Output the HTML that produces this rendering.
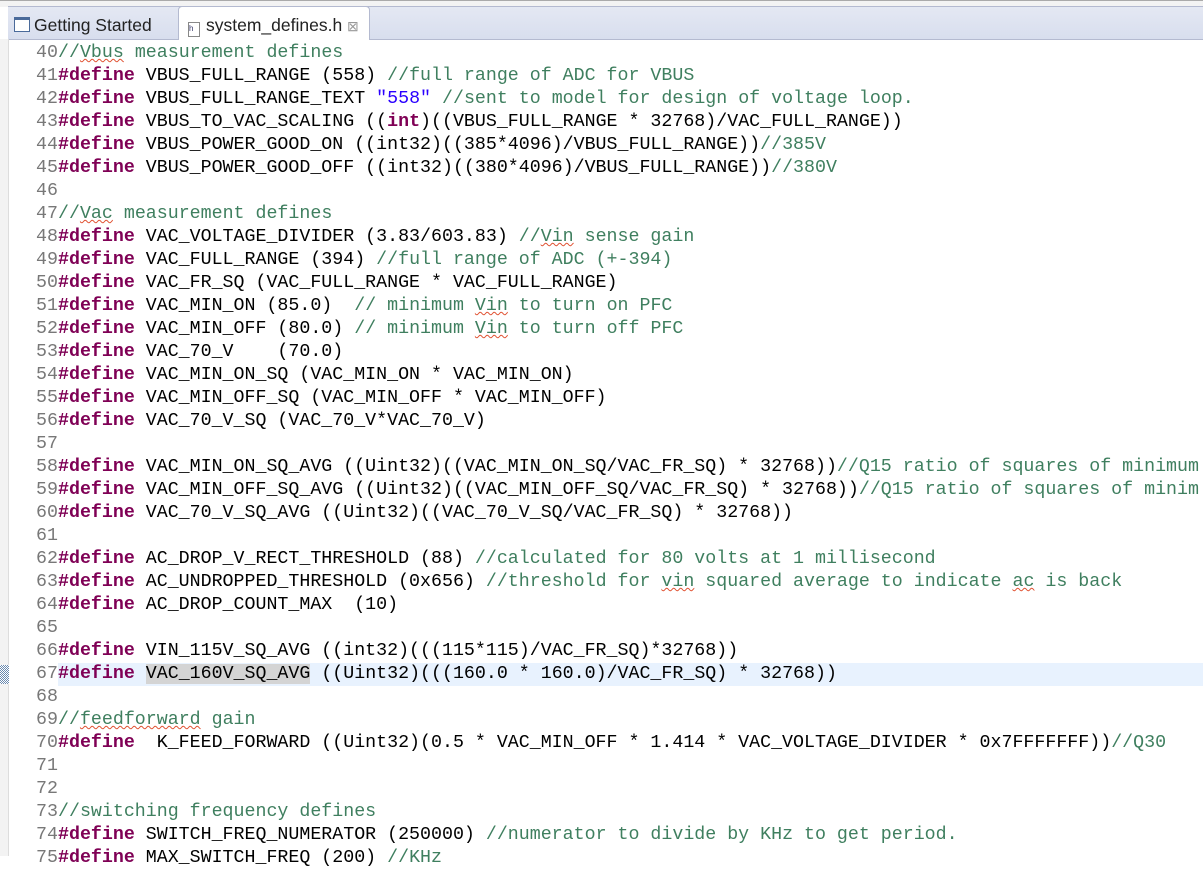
<!DOCTYPE html>
<html><head><style>
body{margin:0;width:1203px;height:856px;overflow:hidden;background:#fff;position:relative;font-family:"Liberation Mono",monospace}
.top{position:absolute;left:0;top:0;width:1203px;height:6px;background:#f3f3f3;border-top:1px solid #aaa}
.bar{position:absolute;left:8px;top:6px;width:1195px;height:32px;background:linear-gradient(#e4e8f3,#d8deee);border-top:1px solid #b4bad0;border-bottom:1px solid #b4bad0}
.tab{position:absolute;top:2px;height:32px;font-family:"Liberation Sans",sans-serif;font-size:17.5px;color:#222;line-height:32px}
.t2{left:170px;width:190px;background:#fff;border:1px solid #b4bad0;border-bottom:none;height:33px;border-radius:4px 4px 0 0;top:-1px;line-height:36px}
.left{position:absolute;left:0;top:39px;width:8px;height:817px;background:#f3f3f3;border-right:1px solid #ddd}
.code{position:absolute;left:9px;top:42px;width:1194px}
.l{height:23px;line-height:23px;font-size:18.3px;white-space:pre;color:#000;position:relative}
.n{display:inline-block;width:49px;text-align:right;color:#787878}
.k{color:#7f0055;font-weight:bold}
.c{color:#3f7f5f}
.s{color:#2a00ff}
.hl{background:#e8f2fe}
.sel{background:#d4d4d4}
.sq{text-decoration:underline wavy #e05030;text-decoration-thickness:1px}
</style></head><body>
<div class="top"></div>
<div class="bar">
<div class="tab" style="left:6px"><span style="display:inline-block;width:14px;height:11px;border:1px solid #4a6a9a;border-top:3px solid #4a6a9a;vertical-align:-1px;margin-right:4px;background:#fff"></span>Getting Started</div>
<div class="tab t2"><span style="display:inline-block;width:10px;height:13px;border:1px solid #888;font-size:8px;line-height:12px;vertical-align:0px;margin:0 6px 0 9px;color:#336">h</span>system_defines.h <span style="color:#999;font-size:14px">⊠</span></div>
</div>
<div class="left"></div>
<div class="code">
<div class="l"><span class="n">40</span><span class="c">//<span class="sq">Vbus</span> measurement defines</span></div>
<div class="l"><span class="n">41</span><span class="k">#define</span> VBUS_FULL_RANGE (558) <span class="c">//full range of ADC for VBUS</span></div>
<div class="l"><span class="n">42</span><span class="k">#define</span> VBUS_FULL_RANGE_TEXT <span class="s">"558"</span> <span class="c">//sent to model for design of voltage loop.</span></div>
<div class="l"><span class="n">43</span><span class="k">#define</span> VBUS_TO_VAC_SCALING ((<span class="k">int</span>)((VBUS_FULL_RANGE * 32768)/VAC_FULL_RANGE))</div>
<div class="l"><span class="n">44</span><span class="k">#define</span> VBUS_POWER_GOOD_ON ((int32)((385*4096)/VBUS_FULL_RANGE))<span class="c">//385V</span></div>
<div class="l"><span class="n">45</span><span class="k">#define</span> VBUS_POWER_GOOD_OFF ((int32)((380*4096)/VBUS_FULL_RANGE))<span class="c">//380V</span></div>
<div class="l"><span class="n">46</span></div>
<div class="l"><span class="n">47</span><span class="c">//<span class="sq">Vac</span> measurement defines</span></div>
<div class="l"><span class="n">48</span><span class="k">#define</span> VAC_VOLTAGE_DIVIDER (3.83/603.83) <span class="c">//<span class="sq">Vin</span> sense gain</span></div>
<div class="l"><span class="n">49</span><span class="k">#define</span> VAC_FULL_RANGE (394) <span class="c">//full range of ADC (+-394)</span></div>
<div class="l"><span class="n">50</span><span class="k">#define</span> VAC_FR_SQ (VAC_FULL_RANGE * VAC_FULL_RANGE)</div>
<div class="l"><span class="n">51</span><span class="k">#define</span> VAC_MIN_ON (85.0)  <span class="c">// minimum <span class="sq">Vin</span> to turn on PFC</span></div>
<div class="l"><span class="n">52</span><span class="k">#define</span> VAC_MIN_OFF (80.0) <span class="c">// minimum <span class="sq">Vin</span> to turn off PFC</span></div>
<div class="l"><span class="n">53</span><span class="k">#define</span> VAC_70_V    (70.0)</div>
<div class="l"><span class="n">54</span><span class="k">#define</span> VAC_MIN_ON_SQ (VAC_MIN_ON * VAC_MIN_ON)</div>
<div class="l"><span class="n">55</span><span class="k">#define</span> VAC_MIN_OFF_SQ (VAC_MIN_OFF * VAC_MIN_OFF)</div>
<div class="l"><span class="n">56</span><span class="k">#define</span> VAC_70_V_SQ (VAC_70_V*VAC_70_V)</div>
<div class="l"><span class="n">57</span></div>
<div class="l"><span class="n">58</span><span class="k">#define</span> VAC_MIN_ON_SQ_AVG ((Uint32)((VAC_MIN_ON_SQ/VAC_FR_SQ) * 32768))<span class="c">//Q15 ratio of squares of minimum</span></div>
<div class="l"><span class="n">59</span><span class="k">#define</span> VAC_MIN_OFF_SQ_AVG ((Uint32)((VAC_MIN_OFF_SQ/VAC_FR_SQ) * 32768))<span class="c">//Q15 ratio of squares of minim</span></div>
<div class="l"><span class="n">60</span><span class="k">#define</span> VAC_70_V_SQ_AVG ((Uint32)((VAC_70_V_SQ/VAC_FR_SQ) * 32768))</div>
<div class="l"><span class="n">61</span></div>
<div class="l"><span class="n">62</span><span class="k">#define</span> AC_DROP_V_RECT_THRESHOLD (88) <span class="c">//calculated for 80 volts at 1 millisecond</span></div>
<div class="l"><span class="n">63</span><span class="k">#define</span> AC_UNDROPPED_THRESHOLD (0x656) <span class="c">//threshold for <span class="sq">vin</span> squared average to indicate <span class="sq">ac</span> is back</span></div>
<div class="l"><span class="n">64</span><span class="k">#define</span> AC_DROP_COUNT_MAX  (10)</div>
<div class="l"><span class="n">65</span></div>
<div class="l"><span class="n">66</span><span class="k">#define</span> VIN_115V_SQ_AVG ((int32)(((115*115)/VAC_FR_SQ)*32768))</div>
<div class="l"><span style="position:absolute;left:-9px;top:2px;width:9px;height:19px;background:repeating-conic-gradient(#6a8ab0 0 25%,#fff 0 50%) 0 0/2px 2px"></span><span class="n">67</span><span class="hl" style="display:inline-block;width:1145px"><span class="k">#define</span> <span class="sel">VAC_160V_SQ_AVG</span> ((Uint32)(((160.0 * 160.0)/VAC_FR_SQ) * 32768))</span></div>
<div class="l"><span class="n">68</span></div>
<div class="l"><span class="n">69</span><span class="c">//<span class="sq">feedforward</span> gain</span></div>
<div class="l"><span class="n">70</span><span class="k">#define</span>  K_FEED_FORWARD ((Uint32)(0.5 * VAC_MIN_OFF * 1.414 * VAC_VOLTAGE_DIVIDER * 0x7FFFFFFF))<span class="c">//Q30</span></div>
<div class="l"><span class="n">71</span></div>
<div class="l"><span class="n">72</span></div>
<div class="l"><span class="n">73</span><span class="c">//switching frequency defines</span></div>
<div class="l"><span class="n">74</span><span class="k">#define</span> SWITCH_FREQ_NUMERATOR (250000) <span class="c">//numerator to divide by KHz to get period.</span></div>
<div class="l"><span class="n">75</span><span class="k">#define</span> MAX_SWITCH_FREQ (200) <span class="c">//KHz</span></div>
</div>
</body></html>
